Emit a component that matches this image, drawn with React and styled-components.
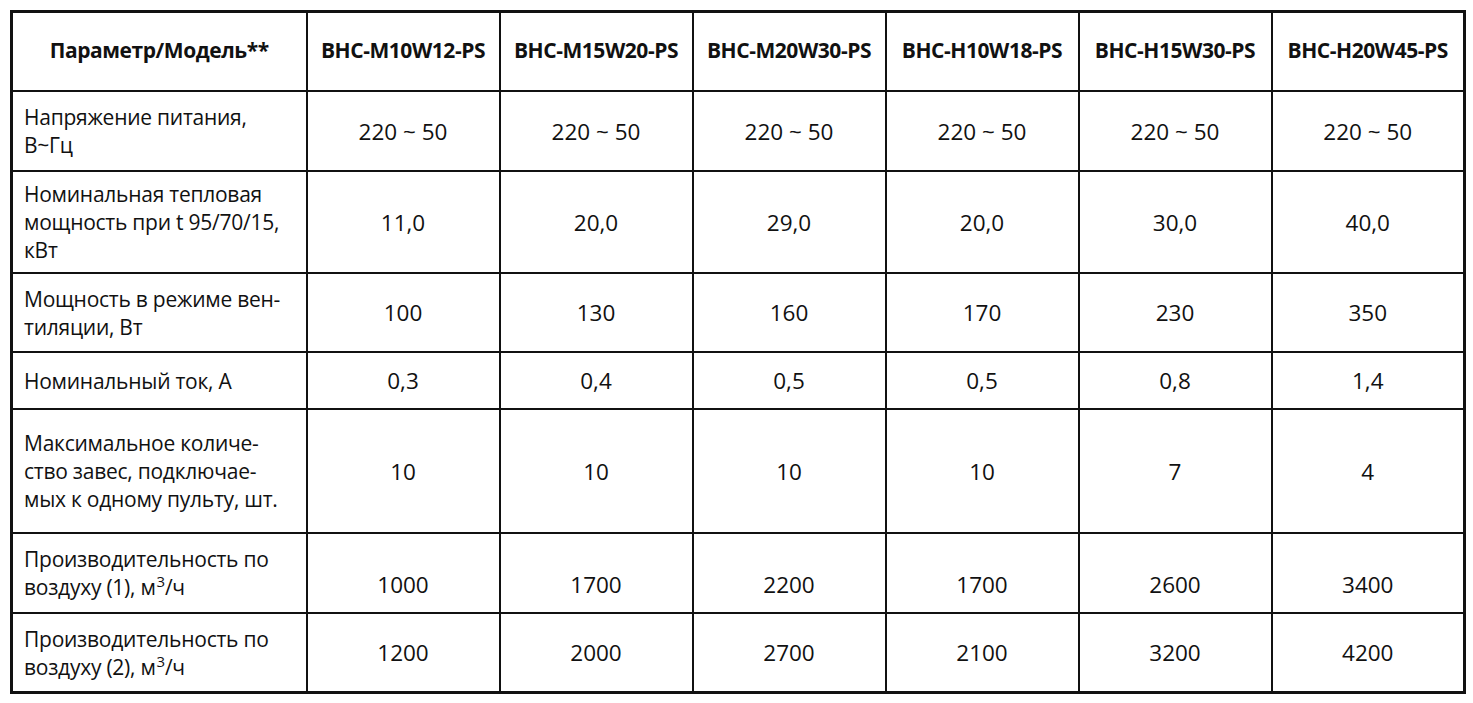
import { createGlobalStyle, styled } from "styled-components";

const GlobalStyle = createGlobalStyle`
  html, body {
    margin: 0;
    padding: 0;
    background: #ffffff;
  }
  body {
    font-family: "Open Sans", "Noto Sans", sans-serif;
    color: #111111;
  }
`;

const models = [
  "BHC-M10W12-PS",
  "BHC-M15W20-PS",
  "BHC-M20W30-PS",
  "BHC-H10W18-PS",
  "BHC-H15W30-PS",
  "BHC-H20W45-PS",
];

const rows = [
  {
    label: ["Напряжение питания,", "В~Гц"],
    values: ["220 ~ 50", "220 ~ 50", "220 ~ 50", "220 ~ 50", "220 ~ 50", "220 ~ 50"],
    height: 80,
  },
  {
    label: ["Номинальная тепловая", "мощность при t 95/70/15,", "кВт"],
    values: ["11,0", "20,0", "29,0", "20,0", "30,0", "40,0"],
    height: 102,
  },
  {
    label: ["Мощность в режиме вен-", "тиляции, Вт"],
    values: ["100", "130", "160", "170", "230", "350"],
    height: 79,
  },
  {
    label: ["Номинальный ток, А"],
    values: ["0,3", "0,4", "0,5", "0,5", "0,8", "1,4"],
    height: 57,
  },
  {
    label: ["Максимальное количе-", "ство завес, подключае-", "мых к одному пульту, шт."],
    values: ["10", "10", "10", "10", "7", "4"],
    height: 124,
  },
  {
    label: ["Производительность по", "воздуху (1), м", "3", "/ч"],
    sup: true,
    values: ["1000", "1700", "2200", "1700", "2600", "3400"],
    height: 80,
    low: true,
  },
  {
    label: ["Производительность по", "воздуху (2), м", "3", "/ч"],
    sup: true,
    values: ["1200", "2000", "2700", "2100", "3200", "4200"],
    height: 79,
  },
];

const Page = styled.div`
  padding: 10px 10px 10px 10px;
`;

const Table = styled.table`
  border-collapse: collapse;
  table-layout: fixed;
  width: 1453px;
  border: 3px solid #111111;
`;

const Col = styled.col`
  width: ${(p) => p.$w}px;
`;

const HeadCell = styled.th`
  height: 74px;
  border: 2px solid #111111;
  font-family: "Open Sans", "Noto Sans", sans-serif;
  font-size: 21px;
  font-weight: 700;
  letter-spacing: -0.45px;
  text-align: center;
  vertical-align: middle;
  padding: 0 2px 3px;
  white-space: nowrap;
`;

const LabelCell = styled.td`
  height: ${(p) => p.$h - 2}px;
  border: 2px solid #111111;
  padding: 0 4px 0 11px;
  font-size: 21px;
  line-height: 28px;
  letter-spacing: -0.25px;
  vertical-align: middle;
  white-space: nowrap;
  sup {
    font-size: 15px;
    line-height: 0;
    vertical-align: 8px;
    margin-left: 1px;
  }
`;

const ValueCell = styled.td`
  border: 2px solid #111111;
  font-size: 22.5px;
  text-align: center;
  vertical-align: middle;
  padding: ${(p) => (p.$low ? "22px 0 0" : "0")};
`;

const Label = ({ row }) => {
  if (row.sup) {
    return (
      <>
        {row.label[0]}
        <br />
        {row.label[1]}
        <sup>{row.label[2]}</sup>
        {row.label[3]}
      </>
    );
  }
  return row.label.map((line, i) => (
    <span key={i}>
      {i > 0 && <br />}
      {line}
    </span>
  ));
};

export default function App() {
  return (
    <>
      <GlobalStyle />
      <Page>
        <Table>
          <colgroup>
            <Col $w={295} />
            {models.map((m) => (
              <Col key={m} $w={193} />
            ))}
          </colgroup>
          <thead>
            <tr>
              <HeadCell>Параметр/Модель**</HeadCell>
              {models.map((m) => (
                <HeadCell key={m}>{m}</HeadCell>
              ))}
            </tr>
          </thead>
          <tbody>
            {rows.map((row, r) => (
              <tr key={r}>
                <LabelCell $h={row.height}>
                  <Label row={row} />
                </LabelCell>
                {row.values.map((v, i) => (
                  <ValueCell key={i} $low={row.low}>
                    {v}
                  </ValueCell>
                ))}
              </tr>
            ))}
          </tbody>
        </Table>
      </Page>
    </>
  );
}
